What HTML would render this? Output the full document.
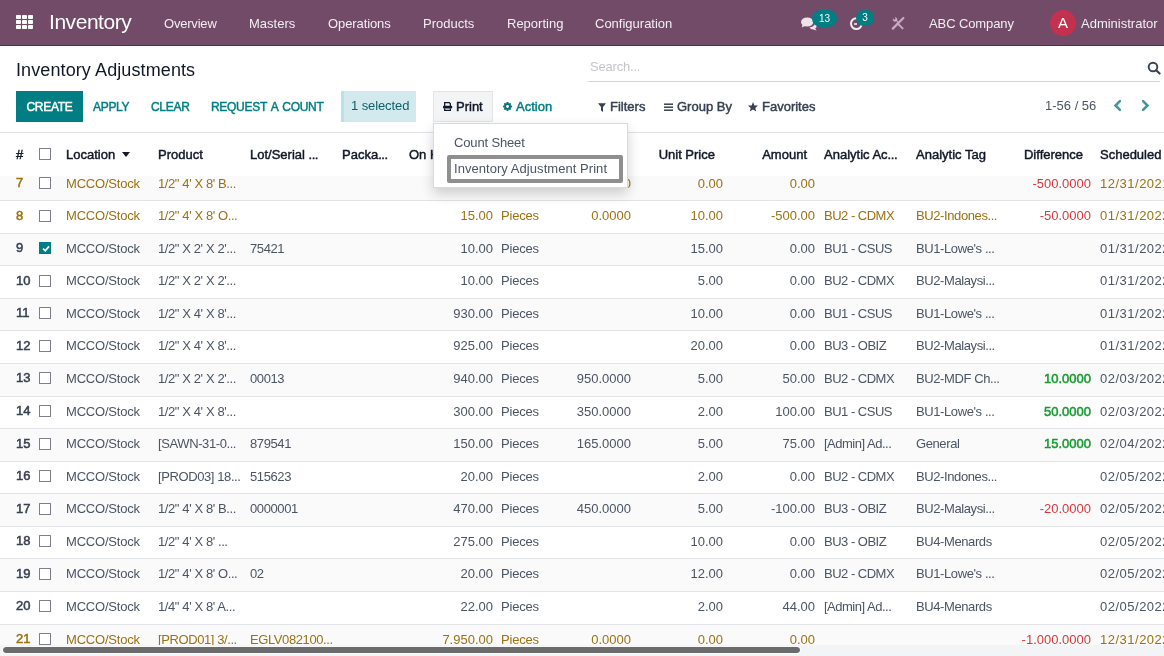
<!DOCTYPE html>
<html><head><meta charset="utf-8">
<style>
*{box-sizing:border-box;margin:0;padding:0}
html,body{width:1164px;height:656px;overflow:hidden;background:#fff;font-family:"Liberation Sans",sans-serif;font-size:13px;color:#4b5563}
.abs{position:absolute}
svg{position:absolute;overflow:visible}
#nav{position:absolute;left:0;top:0;width:1164px;height:46px;background:#714b67;border-bottom:1px solid #4d3145;color:#fff}
#nav .t{position:absolute;white-space:nowrap;line-height:20px;top:14px;font-size:13px;color:#f3eef2;letter-spacing:0px}
#nav .app{font-size:21px;top:10px;line-height:24px;color:#fff;letter-spacing:-0.45px}
.badge{position:absolute;top:10px;height:17px;border-radius:8.5px;background:#017e84;color:#fff;font-size:10px;line-height:17px;text-align:center}
.ttl{position:absolute;left:16px;top:59px;font-size:18px;line-height:22px;color:#111827;white-space:nowrap;letter-spacing:0.1px}
.btn{position:absolute;top:92px;height:31px;line-height:31px;font-size:12px;white-space:nowrap;color:#017e84;letter-spacing:-0.3px;word-spacing:1.6px;-webkit-text-stroke:0.45px currentColor}
.create{top:91px;line-height:33px;height:31px}
.create{left:16px;width:67px;background:#017e84;color:#fff;text-align:center}
.sel{position:absolute;left:341px;top:91px;width:75px;height:31px;background:#d2eaee;border-left:3px solid #bde0e6;color:#0e5f69;line-height:29px;padding-left:7px;white-space:nowrap;letter-spacing:-0.1px}
.print{position:absolute;left:433px;top:91px;width:60px;height:31px;background:#f3f4f6;border:1px solid #e2e4e8}
.tb{position:absolute;top:97px;line-height:20px;white-space:nowrap;color:#374151;-webkit-text-stroke:0.45px currentColor}
.search{position:absolute;left:588px;top:81px;width:572px;height:1px;background:#d1d5db}
.ph{position:absolute;left:590px;top:57px;line-height:20px;color:#c4c6ca;white-space:nowrap}
.cpline{position:absolute;left:0;top:132px;width:1164px;height:1px;background:#dee2e6}
#thead{position:absolute;left:0;top:133px;width:1164px;height:43px;background:#fff}
.th{position:absolute;top:12px;line-height:20px;color:#111827;white-space:nowrap;-webkit-text-stroke:0.45px currentColor}
.row{position:absolute;left:0;width:1164px;height:32.5px;color:#4b5563}
.stb{position:absolute;left:0;width:1164px;background:#fafafb}
.row.wa{color:#9c7210}
.c{position:absolute;top:5.65px;line-height:20px;white-space:nowrap;letter-spacing:-0.4px;word-spacing:0px}
.c.dt{letter-spacing:0.5px}
.el{letter-spacing:-0.45px}
.c.rt{letter-spacing:0;word-spacing:0}
.c.num{top:5px;color:#374151;letter-spacing:0;-webkit-text-stroke:0.5px currentColor}
.row.wa .c.num{color:#9c7210}
.c.r{color:#d6393c}
.c.g{color:#179a2f;-webkit-text-stroke:0.5px currentColor}
.cb{position:absolute;left:39px;top:9px;width:12px;height:12px;border:1px solid #7c7f89;background:#fff;border-radius:0.5px}
.cb.on{background:#017e84;border-color:#017e84}
.hl{position:absolute;left:0;width:1164px;height:1px;background:#e2e3e7}
#dd{position:absolute;left:433px;top:123px;width:195px;height:65px;background:#fff;border:1px solid #d8dadd;box-shadow:0 6px 12px rgba(0,0,0,.18)}
#dd .it{position:absolute;left:20px;line-height:20px;white-space:nowrap;color:#4b5563;letter-spacing:-0.15px}
#dd .foc{position:absolute;left:13px;top:31px;width:176px;height:28px;border:4px solid #8f8f8f;border-radius:2px}
#sbtrack{position:absolute;left:0;top:644.5px;width:1164px;height:12px;background:#f3f4f6}
#sbthumb{position:absolute;left:2px;top:646px;width:799px;height:8px;border-radius:4px;background:#6b6b6b;border:1px solid rgba(255,255,255,.55);background-clip:padding-box}
</style></head><body><div id="wrap" style="position:absolute;left:0;top:0;width:1164px;height:656px;will-change:transform">
<div id="nav">
  <svg style="left:16px;top:15px" width="17" height="14" viewBox="0 0 17 14">
    <g fill="#fff"><rect x="0" y="0" width="5" height="4" rx=".8"/><rect x="6" y="0" width="5" height="4" rx=".8"/><rect x="12" y="0" width="5" height="4" rx=".8"/>
    <rect x="0" y="5" width="5" height="4" rx=".8"/><rect x="6" y="5" width="5" height="4" rx=".8"/><rect x="12" y="5" width="5" height="4" rx=".8"/>
    <rect x="0" y="10" width="5" height="4" rx=".8"/><rect x="6" y="10" width="5" height="4" rx=".8"/><rect x="12" y="10" width="5" height="4" rx=".8"/></g>
  </svg>
  <span class="t app" style="left:49px">Inventory</span>
  <span class="t" style="left:164px;letter-spacing:-0.2px">Overview</span>
  <span class="t" style="left:249px">Masters</span>
  <span class="t" style="left:328px;letter-spacing:-0.1px">Operations</span>
  <span class="t" style="left:423px">Products</span>
  <span class="t" style="left:507px">Reporting</span>
  <span class="t" style="left:595px">Configuration</span>
  <!-- chat icon -->
  <svg style="left:801px;top:17px" width="16" height="14" viewBox="0 0 16 14">
    <ellipse cx="6.2" cy="5" rx="6.2" ry="4.6" fill="#ece6ea"/>
    <path d="M1.5 7.5 L0.8 10.6 L4.6 8.8 Z" fill="#ece6ea"/>
    <path d="M8.5 10.2 C11.5 10.2 13.8 8.6 13.6 6.2 C15.2 7 16 8.2 15.6 9.6 C15.3 10.6 14.6 11.2 14.2 11.5 L15.6 13.4 L11.6 12.2 C10.4 12.3 9.2 11.8 8.5 10.2 Z" fill="#ece6ea"/>
  </svg>
  <div class="badge" style="left:812px;width:25px">13</div>
  <!-- clock icon -->
  <svg style="left:850px;top:17px" width="13" height="13" viewBox="0 0 13 13">
    <circle cx="6.4" cy="6.6" r="5.4" fill="none" stroke="#f3eef2" stroke-width="2"/>
    <path d="M4 7 H7" stroke="#f3eef2" stroke-width="1.6"/>
  </svg>
  <div class="badge" style="left:856px;width:18px;top:10px;height:16px;border-radius:8px;line-height:15px">3</div>
  <!-- tools icon -->
  <svg style="left:891px;top:16px" width="14" height="14" viewBox="0 0 14 14">
    <path d="M1.8 12.6 L12.4 2" stroke="#c9a9c3" stroke-width="2.2" stroke-linecap="round"/>
    <path d="M6.5 7.4 L11.6 12.4" stroke="#c9a9c3" stroke-width="2" stroke-linecap="round"/>
    <path d="M2.2 2.2 C1.4 3.4 1.8 5 3.2 5.5 C4.2 5.9 5 5.6 5.4 5.3 L7.3 7.2 L8.1 6.4 L6.2 4.5 C6.6 3.7 6.4 2.2 5.2 1.5 C4.6 1.2 4 1.1 3.6 1.2 L4.6 2.4 L4 3.6 L2.8 3.4 Z" fill="#c9a9c3"/>
  </svg>
  <span class="t" style="left:929px;letter-spacing:-0.1px">ABC Company</span>
  <div class="abs" style="left:1050px;top:10px;width:26px;height:26px;border-radius:13px;background:#c4314f;color:#fff;text-align:center;line-height:26px;font-size:15px">A</div>
  <span class="t" style="left:1081px">Administrator</span>
</div>
<div class="ttl">Inventory Adjustments</div>
<div class="btn create">CREATE</div>
<div class="btn" style="left:93px">APPLY</div>
<div class="btn" style="left:151px">CLEAR</div>
<div class="btn" style="left:211px">REQUEST A COUNT</div>
<div class="sel">1 selected</div>
<div class="print"></div>
<svg style="left:443px;top:102px" width="10" height="9" viewBox="0 0 10 9">
  <path d="M1.65 3.9 V0.65 H6.3 L7.35 1.7 V3.9" fill="none" stroke="#111827" stroke-width="1.3"/>
  <rect x="0" y="3.8" width="9.2" height="2.8" rx="1" fill="#111827"/>
  <path d="M1.65 6.4 V8.35 H7.35 V6.4" fill="none" stroke="#111827" stroke-width="1.3"/>
</svg>
<div class="tb" style="left:456px;color:#111827">Print</div>
<svg style="left:503px;top:102px" width="9" height="9" viewBox="-4.5 -4.5 9 9">
  <g fill="#0b7378"><circle r="3.3"/>
  <rect x="-1" y="-4.5" width="2" height="9" rx=".4"/><rect x="-1" y="-4.5" width="2" height="9" rx=".4" transform="rotate(45)"/>
  <rect x="-1" y="-4.5" width="2" height="9" rx=".4" transform="rotate(90)"/><rect x="-1" y="-4.5" width="2" height="9" rx=".4" transform="rotate(135)"/></g>
  <circle r="1.4" fill="#fff"/>
</svg>
<div class="tb" style="left:516px;color:#017e84">Action</div>
<svg style="left:598px;top:103px" width="8" height="9" viewBox="0 0 8 9">
  <path d="M0 0.3 H8 L5 4 V9 L3 7.6 V4 Z" fill="#374151"/>
</svg>
<div class="tb" style="left:610px">Filters</div>
<svg style="left:664px;top:103px" width="9" height="8" viewBox="0 0 9 8">
  <g stroke="#374151" stroke-width="1.5"><path d="M0 1.2 H9"/><path d="M0 4.2 H9"/><path d="M0 7.2 H9"/></g>
</svg>
<div class="tb" style="left:677px">Group By</div>
<svg style="left:748px;top:102px" width="10" height="10" viewBox="0 0 10 10">
  <path d="M5 0 L6.4 3.4 L10 3.6 L7.3 5.9 L8.2 9.5 L5 7.6 L1.8 9.5 L2.7 5.9 L0 3.6 L3.6 3.4 Z" fill="#374151"/>
</svg>
<div class="tb" style="left:762px">Favorites</div>
<div class="ph" style="letter-spacing:-0.2px">Search...</div>
<div class="search"></div>
<svg style="left:1147px;top:61px" width="14" height="14" viewBox="0 0 14 14">
  <circle cx="6" cy="6" r="4.3" fill="none" stroke="#374151" stroke-width="1.9"/>
  <path d="M9.2 9.2 L12.6 12.6" stroke="#374151" stroke-width="2.1" stroke-linecap="round"/>
</svg>
<div class="tb" style="left:1045px;top:96px;color:#4b5563;-webkit-text-stroke:0">1-56 / 56</div>
<svg style="left:1113px;top:99px" width="9" height="13" viewBox="0 0 9 13">
  <path d="M6.9 2.1 L2.5 6.5 L6.9 10.9" fill="none" stroke="#3f979b" stroke-width="2.5" stroke-linecap="round"/>
</svg>
<svg style="left:1141px;top:99px" width="9" height="13" viewBox="0 0 9 13">
  <path d="M2.1 2.1 L6.5 6.5 L2.1 10.9" fill="none" stroke="#3f979b" stroke-width="2.5" stroke-linecap="round"/>
</svg>
<div class="cpline"></div>
<div id="rows" class="abs" style="left:0;top:0;width:1164px;height:656px">
<div class="stb" style="top:176px;height:24px"></div>
<div class="row st wa" style="top:168.0px"><span class="c num" style="left:16px">7</span><span class="cb"></span><span class="c" style="left:66px;letter-spacing:-0.2px">MCCO/Stock</span><span class="c" style="left:158px;letter-spacing:-0.4px">1/2" 4' X 8' B<span class="el">...</span></span><span class="c" style="left:501px;letter-spacing:-0.2px">Pieces</span><span class="c" style="left:1100px;letter-spacing:0.5px">12/31/2021</span><span class="c rt" style="right:671px">500.00</span><span class="c rt" style="right:533px">0.0000</span><span class="c rt" style="right:441px">0.00</span><span class="c rt" style="right:349px">0.00</span><span class="c rt b r" style="right:73px">-500.0000</span></div>
<div class="row wa" style="top:200.57px"><span class="c num" style="left:16px">8</span><span class="cb"></span><span class="c" style="left:66px;letter-spacing:-0.2px">MCCO/Stock</span><span class="c" style="left:158px;letter-spacing:-0.4px">1/2" 4' X 8' O<span class="el">...</span></span><span class="c" style="left:501px;letter-spacing:-0.2px">Pieces</span><span class="c" style="left:824px;letter-spacing:-0.5px">BU2 - CDMX</span><span class="c" style="left:916px;letter-spacing:-0.4px">BU2-Indones<span class="el">...</span></span><span class="c" style="left:1100px;letter-spacing:0.5px">01/31/2022</span><span class="c rt" style="right:671px">15.00</span><span class="c rt" style="right:533px">0.0000</span><span class="c rt" style="right:441px">10.00</span><span class="c rt" style="right:349px">-500.00</span><span class="c rt b r" style="right:73px">-50.0000</span></div>
<div class="stb" style="top:234px;height:31px"></div>
<div class="row st" style="top:233.14px"><span class="c num" style="left:16px">9</span><span class="cb on"><svg style="left:2px;top:2px" width="8" height="7" viewBox="0 0 8 7"><path d="M1 3.6 L3.3 5.8 L7 1.4" fill="none" stroke="#fff" stroke-width="1.7"/></svg></span><span class="c" style="left:66px;letter-spacing:-0.2px">MCCO/Stock</span><span class="c" style="left:158px;letter-spacing:-0.4px">1/2" X 2' X 2'<span class="el">...</span></span><span class="c" style="left:250px;letter-spacing:-0.4px">75421</span><span class="c" style="left:501px;letter-spacing:-0.2px">Pieces</span><span class="c" style="left:824px;letter-spacing:-0.5px">BU1 - CSUS</span><span class="c" style="left:916px;letter-spacing:-0.4px">BU1-Lowe's <span class="el">...</span></span><span class="c" style="left:1100px;letter-spacing:0.5px">01/31/2022</span><span class="c rt" style="right:671px">10.00</span><span class="c rt" style="right:441px">15.00</span><span class="c rt" style="right:349px">0.00</span></div>
<div class="row" style="top:265.71000000000004px"><span class="c num" style="left:16px">10</span><span class="cb"></span><span class="c" style="left:66px;letter-spacing:-0.2px">MCCO/Stock</span><span class="c" style="left:158px;letter-spacing:-0.4px">1/2" X 2' X 2'<span class="el">...</span></span><span class="c" style="left:501px;letter-spacing:-0.2px">Pieces</span><span class="c" style="left:824px;letter-spacing:-0.5px">BU2 - CDMX</span><span class="c" style="left:916px;letter-spacing:-0.4px">BU2-Malaysi<span class="el">...</span></span><span class="c" style="left:1100px;letter-spacing:0.5px">01/31/2022</span><span class="c rt" style="right:671px">10.00</span><span class="c rt" style="right:441px">5.00</span><span class="c rt" style="right:349px">0.00</span></div>
<div class="stb" style="top:299px;height:31px"></div>
<div class="row st" style="top:298.28px"><span class="c num" style="left:16px">11</span><span class="cb"></span><span class="c" style="left:66px;letter-spacing:-0.2px">MCCO/Stock</span><span class="c" style="left:158px;letter-spacing:-0.4px">1/2" X 4' X 8'<span class="el">...</span></span><span class="c" style="left:501px;letter-spacing:-0.2px">Pieces</span><span class="c" style="left:824px;letter-spacing:-0.5px">BU1 - CSUS</span><span class="c" style="left:916px;letter-spacing:-0.4px">BU1-Lowe's <span class="el">...</span></span><span class="c" style="left:1100px;letter-spacing:0.5px">01/31/2022</span><span class="c rt" style="right:671px">930.00</span><span class="c rt" style="right:441px">10.00</span><span class="c rt" style="right:349px">0.00</span></div>
<div class="row" style="top:330.85px"><span class="c num" style="left:16px">12</span><span class="cb"></span><span class="c" style="left:66px;letter-spacing:-0.2px">MCCO/Stock</span><span class="c" style="left:158px;letter-spacing:-0.4px">1/2" X 4' X 8'<span class="el">...</span></span><span class="c" style="left:501px;letter-spacing:-0.2px">Pieces</span><span class="c" style="left:824px;letter-spacing:-0.5px">BU3 - OBIZ</span><span class="c" style="left:916px;letter-spacing:-0.4px">BU2-Malaysi<span class="el">...</span></span><span class="c" style="left:1100px;letter-spacing:0.5px">01/31/2022</span><span class="c rt" style="right:671px">925.00</span><span class="c rt" style="right:441px">20.00</span><span class="c rt" style="right:349px">0.00</span></div>
<div class="stb" style="top:364px;height:32px"></div>
<div class="row st" style="top:363.42px"><span class="c num" style="left:16px">13</span><span class="cb"></span><span class="c" style="left:66px;letter-spacing:-0.2px">MCCO/Stock</span><span class="c" style="left:158px;letter-spacing:-0.4px">1/2" X 2' X 2'<span class="el">...</span></span><span class="c" style="left:250px;letter-spacing:-0.4px">00013</span><span class="c" style="left:501px;letter-spacing:-0.2px">Pieces</span><span class="c" style="left:824px;letter-spacing:-0.5px">BU2 - CDMX</span><span class="c" style="left:916px;letter-spacing:-0.4px">BU2-MDF Ch<span class="el">...</span></span><span class="c" style="left:1100px;letter-spacing:0.5px">02/03/2022</span><span class="c rt" style="right:671px">940.00</span><span class="c rt" style="right:533px">950.0000</span><span class="c rt" style="right:441px">5.00</span><span class="c rt" style="right:349px">50.00</span><span class="c rt b g" style="right:73px">10.0000</span></div>
<div class="row" style="top:395.99px"><span class="c num" style="left:16px">14</span><span class="cb"></span><span class="c" style="left:66px;letter-spacing:-0.2px">MCCO/Stock</span><span class="c" style="left:158px;letter-spacing:-0.4px">1/2" X 4' X 8'<span class="el">...</span></span><span class="c" style="left:501px;letter-spacing:-0.2px">Pieces</span><span class="c" style="left:824px;letter-spacing:-0.5px">BU1 - CSUS</span><span class="c" style="left:916px;letter-spacing:-0.4px">BU1-Lowe's <span class="el">...</span></span><span class="c" style="left:1100px;letter-spacing:0.5px">02/03/2022</span><span class="c rt" style="right:671px">300.00</span><span class="c rt" style="right:533px">350.0000</span><span class="c rt" style="right:441px">2.00</span><span class="c rt" style="right:349px">100.00</span><span class="c rt b g" style="right:73px">50.0000</span></div>
<div class="stb" style="top:429px;height:32px"></div>
<div class="row st" style="top:428.56px"><span class="c num" style="left:16px">15</span><span class="cb"></span><span class="c" style="left:66px;letter-spacing:-0.2px">MCCO/Stock</span><span class="c" style="left:158px;letter-spacing:-0.4px">[SAWN-31-0<span class="el">...</span></span><span class="c" style="left:250px;letter-spacing:-0.4px">879541</span><span class="c" style="left:501px;letter-spacing:-0.2px">Pieces</span><span class="c" style="left:824px;letter-spacing:-0.5px">[Admin] Ad<span class="el">...</span></span><span class="c" style="left:916px;letter-spacing:-0.4px">General</span><span class="c" style="left:1100px;letter-spacing:0.5px">02/04/2022</span><span class="c rt" style="right:671px">150.00</span><span class="c rt" style="right:533px">165.0000</span><span class="c rt" style="right:441px">5.00</span><span class="c rt" style="right:349px">75.00</span><span class="c rt b g" style="right:73px">15.0000</span></div>
<div class="row" style="top:461.13px"><span class="c num" style="left:16px">16</span><span class="cb"></span><span class="c" style="left:66px;letter-spacing:-0.2px">MCCO/Stock</span><span class="c" style="left:158px;letter-spacing:-0.4px">[PROD03] 18<span class="el">...</span></span><span class="c" style="left:250px;letter-spacing:-0.4px">515623</span><span class="c" style="left:501px;letter-spacing:-0.2px">Pieces</span><span class="c" style="left:824px;letter-spacing:-0.5px">BU2 - CDMX</span><span class="c" style="left:916px;letter-spacing:-0.4px">BU2-Indones<span class="el">...</span></span><span class="c" style="left:1100px;letter-spacing:0.5px">02/05/2022</span><span class="c rt" style="right:671px">20.00</span><span class="c rt" style="right:441px">2.00</span><span class="c rt" style="right:349px">0.00</span></div>
<div class="stb" style="top:494px;height:32px"></div>
<div class="row st" style="top:493.7px"><span class="c num" style="left:16px">17</span><span class="cb"></span><span class="c" style="left:66px;letter-spacing:-0.2px">MCCO/Stock</span><span class="c" style="left:158px;letter-spacing:-0.4px">1/2" 4' X 8' B<span class="el">...</span></span><span class="c" style="left:250px;letter-spacing:-0.4px">0000001</span><span class="c" style="left:501px;letter-spacing:-0.2px">Pieces</span><span class="c" style="left:824px;letter-spacing:-0.5px">BU3 - OBIZ</span><span class="c" style="left:916px;letter-spacing:-0.4px">BU2-Malaysi<span class="el">...</span></span><span class="c" style="left:1100px;letter-spacing:0.5px">02/05/2022</span><span class="c rt" style="right:671px">470.00</span><span class="c rt" style="right:533px">450.0000</span><span class="c rt" style="right:441px">5.00</span><span class="c rt" style="right:349px">-100.00</span><span class="c rt b r" style="right:73px">-20.0000</span></div>
<div class="row" style="top:526.27px"><span class="c num" style="left:16px">18</span><span class="cb"></span><span class="c" style="left:66px;letter-spacing:-0.2px">MCCO/Stock</span><span class="c" style="left:158px;letter-spacing:-0.4px">1/2" 4' X 8' <span class="el">...</span></span><span class="c" style="left:501px;letter-spacing:-0.2px">Pieces</span><span class="c" style="left:824px;letter-spacing:-0.5px">BU3 - OBIZ</span><span class="c" style="left:916px;letter-spacing:-0.4px">BU4-Menards</span><span class="c" style="left:1100px;letter-spacing:0.5px">02/05/2022</span><span class="c rt" style="right:671px">275.00</span><span class="c rt" style="right:441px">10.00</span><span class="c rt" style="right:349px">0.00</span></div>
<div class="stb" style="top:559px;height:32px"></div>
<div class="row st" style="top:558.84px"><span class="c num" style="left:16px">19</span><span class="cb"></span><span class="c" style="left:66px;letter-spacing:-0.2px">MCCO/Stock</span><span class="c" style="left:158px;letter-spacing:-0.4px">1/2" 4' X 8' O<span class="el">...</span></span><span class="c" style="left:250px;letter-spacing:-0.4px">02</span><span class="c" style="left:501px;letter-spacing:-0.2px">Pieces</span><span class="c" style="left:824px;letter-spacing:-0.5px">BU2 - CDMX</span><span class="c" style="left:916px;letter-spacing:-0.4px">BU1-Lowe's <span class="el">...</span></span><span class="c" style="left:1100px;letter-spacing:0.5px">02/05/2022</span><span class="c rt" style="right:671px">20.00</span><span class="c rt" style="right:441px">12.00</span><span class="c rt" style="right:349px">0.00</span></div>
<div class="row" style="top:591.4100000000001px"><span class="c num" style="left:16px">20</span><span class="cb"></span><span class="c" style="left:66px;letter-spacing:-0.2px">MCCO/Stock</span><span class="c" style="left:158px;letter-spacing:-0.4px">1/4" 4' X 8' A<span class="el">...</span></span><span class="c" style="left:501px;letter-spacing:-0.2px">Pieces</span><span class="c" style="left:824px;letter-spacing:-0.5px">[Admin] Ad<span class="el">...</span></span><span class="c" style="left:916px;letter-spacing:-0.4px">BU4-Menards</span><span class="c" style="left:1100px;letter-spacing:0.5px">02/05/2022</span><span class="c rt" style="right:671px">22.00</span><span class="c rt" style="right:441px">2.00</span><span class="c rt" style="right:349px">44.00</span></div>
<div class="stb" style="top:625px;height:31px"></div>
<div class="row st wa" style="top:623.98px"><span class="c num" style="left:16px">21</span><span class="cb"></span><span class="c" style="left:66px;letter-spacing:-0.2px">MCCO/Stock</span><span class="c" style="left:158px;letter-spacing:-0.4px">[PROD01] 3/<span class="el">...</span></span><span class="c" style="left:250px;letter-spacing:-0.4px">EGLV082100<span class="el">...</span></span><span class="c" style="left:501px;letter-spacing:-0.2px">Pieces</span><span class="c" style="left:1100px;letter-spacing:0.5px">12/31/2022</span><span class="c rt" style="right:671px">7.950.00</span><span class="c rt" style="right:533px">0.0000</span><span class="c rt" style="right:441px">0.00</span><span class="c rt" style="right:349px">0.00</span><span class="c rt b r" style="right:73px">-1.000.0000</span></div>
<div class="hl" style="top:200px"></div>
<div class="hl" style="top:233px"></div>
<div class="hl" style="top:265px"></div>
<div class="hl" style="top:298px"></div>
<div class="hl" style="top:330px"></div>
<div class="hl" style="top:363px"></div>
<div class="hl" style="top:396px"></div>
<div class="hl" style="top:428px"></div>
<div class="hl" style="top:461px"></div>
<div class="hl" style="top:493px"></div>
<div class="hl" style="top:526px"></div>
<div class="hl" style="top:558px"></div>
<div class="hl" style="top:591px"></div>
<div class="hl" style="top:624px"></div>
<div class="hl" style="top:656px"></div>
</div>
<div id="thead">
<div class="th" style="left:16px">#</div>
<span class="cb" style="top:15px"></span>
<div class="th" style="left:66px">Location</div>
<svg style="left:122px;top:152px;position:fixed" width="8" height="5" viewBox="0 0 8 5"><path d="M0 0 H8 L4 5 Z" fill="#111827"/></svg>
<div class="th" style="left:158px">Product</div>
<div class="th" style="left:250px">Lot/Serial <span class="el">...</span></div>
<div class="th" style="left:342px">Packa<span class="el">...</span></div>
<div class="th" style="left:409px">On Hand</div>
<div class="th" style="right:542px">Counted</div>
<div class="th" style="right:449px">Unit Price</div>
<div class="th" style="right:357px">Amount</div>
<div class="th" style="left:824px">Analytic Ac<span class="el">...</span></div>
<div class="th" style="left:916px">Analytic Tag</div>
<div class="th" style="right:81px">Difference</div>
<div class="th" style="left:1100px">Scheduled Date</div>
</div>
<div id="dd">
  <div class="it" style="top:9px">Count Sheet</div>
  <div class="foc"></div>
  <div class="it" style="top:35px;letter-spacing:0.05px">Inventory Adjustment Print</div>
</div>
<div id="sbtrack"></div>
<div id="sbthumb"></div>
</div></body></html>
